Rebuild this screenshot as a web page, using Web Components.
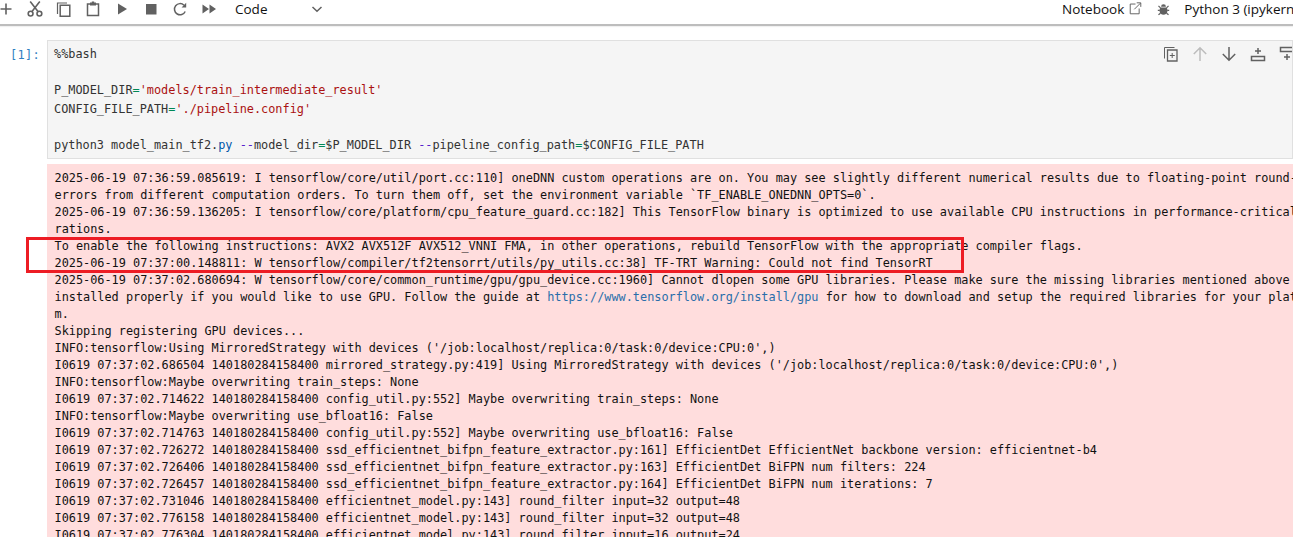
<!DOCTYPE html>
<html>
<head>
<meta charset="utf-8">
<title>Notebook</title>
<style>
    html, body {
        margin: 0;
        height: 100%;
        overflow: hidden;
        background: #fff;
    }
    body {
        position: relative;
        --mono: "DejaVu Sans Mono", "Liberation Mono", monospace;
        --ui: "Open Sans", "Noto Sans", sans-serif;
    }
</style>
</head>
<body>
<nb-toolbar></nb-toolbar>
<nb-cell prompt="[1]:">
    <nb-editor></nb-editor>
    <nb-output></nb-output>
</nb-cell>
<nb-callout></nb-callout>

<script>
// shared icon paths, 16x16 box
const ICONS = {
    add: '<path d="M8 2.5v11M2.5 8h11" stroke="#616161" stroke-width="1.6" fill="none"/>',
    cut: '<g stroke="#616161" stroke-width="1.6" fill="none"><circle cx="3.6" cy="12.6" r="2.4"/><circle cx="12.4" cy="12.6" r="2.4"/><path d="M5 10.6 12.8 .6M11 10.6 3.2 .6"/></g>',
    copy: '<g stroke="#616161" fill="none"><path d="M4.2 15.2V4.2h9.6v11z" stroke-width="1.5"/><path d="M11 2H1.5v11" stroke-width="1.2"/></g>',
    paste: '<path d="M5 3H2.5v11.5h11V3H11" stroke="#616161" stroke-width="1.5" fill="none"/><path d="M5 1.5h1.8V.6h2.4v.9H11v3H5z" fill="#616161"/>',
    run: '<path d="M4 2.5 13 8l-9 5.5z" fill="#616161"/>',
    stop: '<path d="M3 3h10.5v10.5H3z" fill="#616161"/>',
    restart: '<path d="M13.2 10.5A5.6 5.6 0 1 1 12 4.2" stroke="#616161" stroke-width="1.5" fill="none"/><path d="M9.6 6.4h4.6V1.8z" fill="#616161"/>',
    forward: '<path d="M1.5 3.5 8 8l-6.5 4.5zM8.5 3.5 15 8l-6.5 4.5z" fill="#616161"/>',
    chevron: '<path d="M3.5 6 8 10.2 12.5 6" stroke="#616161" stroke-width="1.5" fill="none"/>',
    launch: '<g stroke="#555" stroke-width="1.1" fill="none"><path d="M8 2.5H1.5V14.5h11V8"/><path d="M6.5 9 14 1.5M9.5 1H14.5V6"/></g>',
    bug: '<path d="M4.2 5.5h7.6c.7 1 1 2 1 3v1.5c0 2.4-2.2 4.5-4.8 4.5s-4.800-2.100-4.800-4.500V8.500c0-1 .3-2 1-3zM5 4.500a3 3 0 0 1 6 0z" fill="#616161"/><path d="M1.800 3.500l2.500 2.500M14.200 3.500l-2.500 2.500M1 9h2.500M15 9h-2.500M1.800 14.500l2.500-2M14.200 14.500l-2.500-2" stroke="#616161" stroke-width="1.500" fill="none"/>',
    cellCopy: '<g stroke="#616161" fill="none"><path d="M4.5 4h9.500v11H4.500z" stroke-width="1.300"/><path d="M11.500 1.500H1.500v11"/><path d="M9.200 7v5M6.800 9.500h5"/></g>',
    up: '<path d="M8 15V2M1.800 8 8 1.800 14.200 8" stroke="#bdbdbd" stroke-width="1.500" fill="none"/>',
    down: '<path d="M8 1v13M1.800 8 8 14.200 14.200 8" stroke="#616161" stroke-width="1.500" fill="none"/>',
    above: '<path d="M1.500 10.500h13v4h-13z" stroke="#616161" stroke-width="1.500" fill="none"/><path d="M8 2v6M5 5h6" stroke="#616161" stroke-width="1.500" fill="none"/>',
    below: '<path d="M1.500 1.500h13v4h-13z" stroke="#616161" stroke-width="1.500" fill="none"/><path d="M8 8v6M5 11h6" stroke="#616161" stroke-width="1.500" fill="none"/>'
};

function icon(name, size) {
    return `<svg width="${size}" height="${size}" viewBox="0 0 16 16">${ICONS[name]}</svg>`;
}

class NbToolbar extends HTMLElement {
    constructor() {
        super();
        this.attachShadow({ mode: 'open' });
        const buttons = ['add', 'cut', 'copy', 'paste', 'run', 'stop', 'restart', 'forward'];
        this.shadowRoot.innerHTML = `
            <style>
                :host {
                    display: flex;
                    align-items: center;
                    height: 18px;
                    padding-bottom: 6px;
                    border-bottom: 2px solid #bdbdbd;
                    box-shadow: 0 1px 1px rgba(0, 0, 0, 0.06);
                    font: 13.5px var(--ui);
                    color: #111;
                    white-space: nowrap;
                    box-sizing: content-box;
                }
                .btn {
                    flex: none;
                    width: 29px;
                    display: flex;
                    justify-content: center;
                }
                .left { display: flex; margin-left: -9px; }
                .mode {
                    margin-left: 12px;
                    width: 74px;
                }
                .chev { display: flex; }
                .spring { flex: 1; }
                .kernel { display: flex; align-items: center; width: 231px; }
                .kernel svg { flex: none; display: block; }
                .ext { margin: 0 0 2px 5px; }
                .bug { margin: 0 14px 0 15px; }
            </style>
            <div class="left">
                ${buttons.map(b => `<span class="btn">${icon(b, 16)}</span>`).join('')}
            </div>
            <span class="mode">Code</span>
            <span class="chev">${icon('chevron', 16)}</span>
            <span class="spring"></span>
            <div class="kernel">
                <span>Notebook</span>
                <span class="ext">${icon('launch', 13)}</span>
                <span class="bug">${icon('bug', 13)}</span>
                <span>Python 3 (ipykernel)</span>
            </div>
        `;
    }
}

class NbCell extends HTMLElement {
    constructor() {
        super();
        this.attachShadow({ mode: 'open' });
        this.shadowRoot.innerHTML = `
            <style>
                :host {
                    display: grid;
                    grid-template-columns: 47px 1fr;
                    margin-top: 14px;
                }
                .prompt {
                    font: 12px/18px var(--mono);
                    color: #307fc1;
                    text-align: right;
                    padding: 6px 7px 0 0;
                    box-sizing: border-box;
                    letter-spacing: 0.3px;
                }
                .body {
                    display: flex;
                    flex-direction: column;
                    gap: 5px;
                    min-width: 0;
                }
            </style>
            <div class="prompt">${this.getAttribute('prompt') || ''}</div>
            <div class="body"><slot></slot></div>
        `;
    }
}

class NbEditor extends HTMLElement {
    constructor() {
        super();
        this.attachShadow({ mode: 'open' });
        const actions = ['cellCopy', 'up', 'down', 'above', 'below'];
        this.shadowRoot.innerHTML = `
            <style>
                :host {
                    display: block;
                    position: relative;
                    background: #f5f5f5;
                    border: 1px solid #e0e0e0;
                    padding: 4px 8px 4px 6px;
                    height: 109px;
                    overflow: hidden;
                }
                pre {
                    margin: 0;
                    font: 11.86px/18.2px var(--mono);
                    color: #333;
                }
                .op { color: #008855; }
                .str { color: #aa1111; }
                .prop { color: #0055aa; }
                .flag { color: #5522cc; }
                .actions {
                    position: absolute;
                    top: 5px;
                    right: -3px;
                    display: flex;
                    gap: 13px;
                }
            </style>
            <pre>%%bash

P_MODEL_DIR<span class="op">=</span><span class="str">'models/train_intermediate_result'</span>
CONFIG_FILE_PATH<span class="op">=</span><span class="str">'./pipeline.config'</span>

python3 model_main_tf2.<span class="prop">py</span> <span class="flag">--</span>model_dir<span class="op">=</span>$P_MODEL_DIR <span class="flag">--</span>pipeline_config_path<span class="op">=</span>$CONFIG_FILE_PATH</pre>
            <div class="actions">${actions.map(a => icon(a, 16)).join('')}</div>
        `;
    }
}

const LOG_LINES = [
    "2025-06-19 07:36:59.085619: I tensorflow/core/util/port.cc:110] oneDNN custom operations are on. You may see slightly different numerical results due to floating-point round-",
    "errors from different computation orders. To turn them off, set the environment variable `TF_ENABLE_ONEDNN_OPTS=0`.",
    "2025-06-19 07:36:59.136205: I tensorflow/core/platform/cpu_feature_guard.cc:182] This TensorFlow binary is optimized to use available CPU instructions in performance-critical",
    "rations.",
    "To enable the following instructions: AVX2 AVX512F AVX512_VNNI FMA, in other operations, rebuild TensorFlow with the appropriate compiler flags.",
    "2025-06-19 07:37:00.148811: W tensorflow/compiler/tf2tensorrt/utils/py_utils.cc:38] TF-TRT Warning: Could not find TensorRT",
    "2025-06-19 07:37:02.680694: W tensorflow/core/common_runtime/gpu/gpu_device.cc:1960] Cannot dlopen some GPU libraries. Please make sure the missing libraries mentioned above",
    "installed properly if you would like to use GPU. Follow the guide at <a>https://www.tensorflow.org/install/gpu</a> for how to download and setup the required libraries for your plat",
    "m.",
    "Skipping registering GPU devices...",
    "INFO:tensorflow:Using MirroredStrategy with devices ('/job:localhost/replica:0/task:0/device:CPU:0',)",
    "I0619 07:37:02.686504 140180284158400 mirrored_strategy.py:419] Using MirroredStrategy with devices ('/job:localhost/replica:0/task:0/device:CPU:0',)",
    "INFO:tensorflow:Maybe overwriting train_steps: None",
    "I0619 07:37:02.714622 140180284158400 config_util.py:552] Maybe overwriting train_steps: None",
    "INFO:tensorflow:Maybe overwriting use_bfloat16: False",
    "I0619 07:37:02.714763 140180284158400 config_util.py:552] Maybe overwriting use_bfloat16: False",
    "I0619 07:37:02.726272 140180284158400 ssd_efficientnet_bifpn_feature_extractor.py:161] EfficientDet EfficientNet backbone version: efficientnet-b4",
    "I0619 07:37:02.726406 140180284158400 ssd_efficientnet_bifpn_feature_extractor.py:163] EfficientDet BiFPN num filters: 224",
    "I0619 07:37:02.726457 140180284158400 ssd_efficientnet_bifpn_feature_extractor.py:164] EfficientDet BiFPN num iterations: 7",
    "I0619 07:37:02.731046 140180284158400 efficientnet_model.py:143] round_filter input=32 output=48",
    "I0619 07:37:02.776158 140180284158400 efficientnet_model.py:143] round_filter input=32 output=48",
    "I0619 07:37:02.776304 140180284158400 efficientnet_model.py:143] round_filter input=16 output=24"
];

class NbOutput extends HTMLElement {
    constructor() {
        super();
        this.attachShadow({ mode: 'open' });
        this.shadowRoot.innerHTML = `
            <style>
                :host {
                    display: block;
                    background: #ffdddd;
                    padding: 6px 0 0 7.5px;
                    overflow: hidden;
                }
                pre {
                    margin: 0;
                    font: 11.86px/17px var(--mono);
                    color: #111;
                }
                a { color: #296eaa; }
            </style>
            <pre>${LOG_LINES.join('\n')}</pre>
        `;
    }
}

// red annotation drawn over the screenshot
class NbCallout extends HTMLElement {
    constructor() {
        super();
        this.attachShadow({ mode: 'open' });
        this.shadowRoot.innerHTML = `
            <style>
                :host {
                    position: absolute;
                    left: 26px;
                    top: 237px;
                    width: 932px;
                    height: 30px;
                    border: 3px solid #ed1c24;
                    pointer-events: none;
                }
            </style>
        `;
    }
}

customElements.define('nb-toolbar', NbToolbar);
customElements.define('nb-cell', NbCell);
customElements.define('nb-editor', NbEditor);
customElements.define('nb-output', NbOutput);
customElements.define('nb-callout', NbCallout);
</script>
</body>
</html>
